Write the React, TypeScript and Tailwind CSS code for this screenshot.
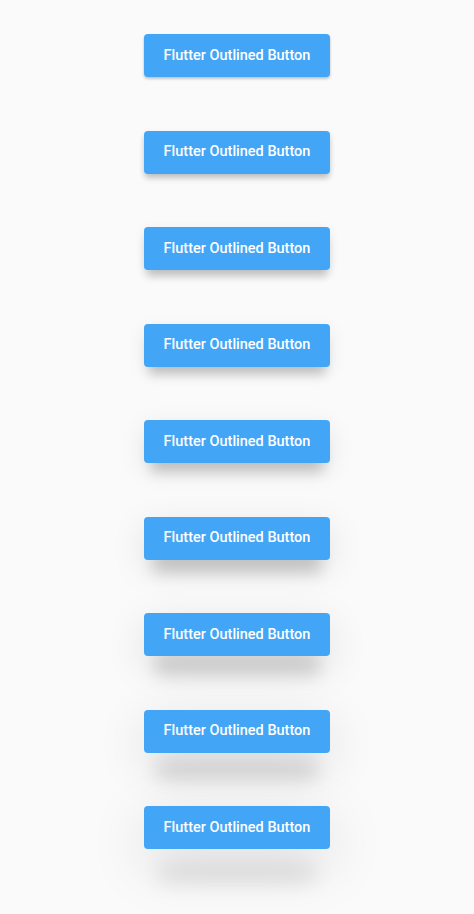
import React from "react";

// Each button sits a little higher than the last one
const shadows = [
  "shadow-[0_2px_3px_rgba(0,0,0,0.18),0_1px_3px_rgba(0,0,0,0.08)]",
  "shadow-[0_5px_6px_-1px_rgba(0,0,0,0.2),0_2px_6px_rgba(0,0,0,0.08)]",
  "shadow-[0_9px_9px_-3px_rgba(0,0,0,0.2),0_3px_12px_rgba(0,0,0,0.08)]",
  "shadow-[0_12px_11px_-5px_rgba(0,0,0,0.2),0_5px_18px_rgba(0,0,0,0.08)]",
  "shadow-[0_16px_13px_-7px_rgba(0,0,0,0.19),0_7px_26px_rgba(0,0,0,0.09)]",
  "shadow-[0_22px_15px_-9px_rgba(0,0,0,0.17),0_9px_34px_rgba(0,0,0,0.1)]",
  "shadow-[0_30px_17px_-11px_rgba(0,0,0,0.15),0_11px_42px_rgba(0,0,0,0.11)]",
  "shadow-[0_38px_19px_-13px_rgba(0,0,0,0.14),0_13px_50px_rgba(0,0,0,0.12)]",
  "shadow-[0_46px_21px_-15px_rgba(0,0,0,0.13),0_15px_58px_rgba(0,0,0,0.13)]",
];

export default function App() {
  return (
    <div className="min-h-screen w-full bg-[#fafafa] flex flex-col items-center pt-[34px] gap-[53.5px] font-['Roboto',sans-serif]">
      {shadows.map((s, i) => (
        <button
          key={i}
          className={`w-[186px] h-[43px] rounded-[4px] bg-[#42a5f5] text-white text-[14.5px] font-medium ${s}`}
        >
          Flutter Outlined Button
        </button>
      ))}
    </div>
  );
}
